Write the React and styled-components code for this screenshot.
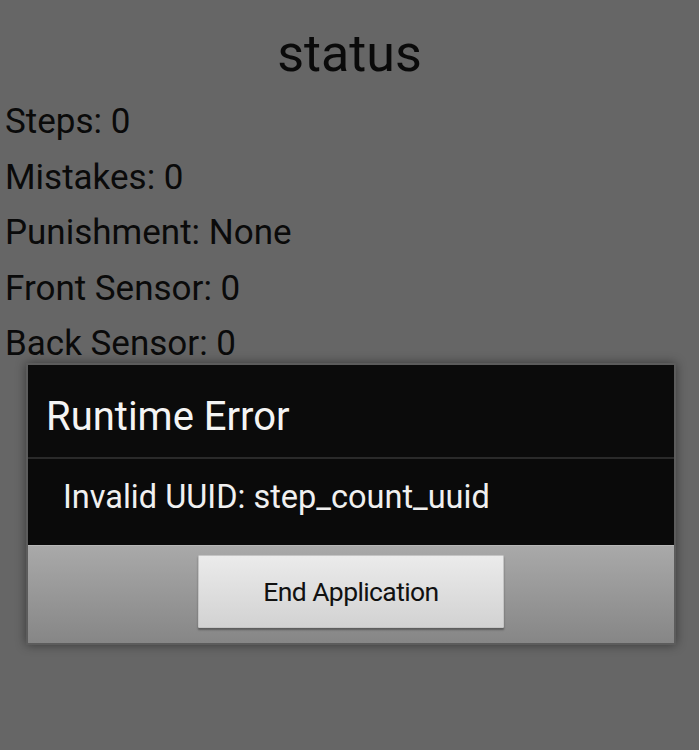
import styled, { createGlobalStyle } from 'styled-components'

const Global = createGlobalStyle`
  html, body {
    margin: 0;
    padding: 0;
    background: #666666;
    font-family: Roboto, 'Noto Sans', sans-serif;
  }
`

const Page = styled.div`
  position: relative;
  width: 699px;
  height: 750px;
  overflow: hidden;
  background: #666666;
  color: #0a0a0a;
`

const Title = styled.h1`
  margin: 0;
  padding-top: 26px;
  font-size: 52px;
  font-weight: 400;
  line-height: 56px;
  text-align: center;
`

const Stats = styled.div`
  padding: 12px 0 0 5px;
  display: flex;
  flex-direction: column;
`

const Stat = styled.div`
  font-size: 35px;
  line-height: 55.5px;
`

const Dialog = styled.div`
  position: absolute;
  top: 363px;
  left: 26px;
  width: 646px;
  border: 2px solid #5c5c5c;
  box-shadow: 0 0 10px rgba(0, 0, 0, 0.45);
  display: flex;
  flex-direction: column;
`

const DialogTitle = styled.div`
  background: #0b0b0b;
  color: #f4f4f4;
  font-size: 40px;
  line-height: 36px;
  padding: 34px 0 22px 18px;
  border-bottom: 2px solid #2a2a2a;
`

const DialogBody = styled.div`
  background: #0a0a0a;
  color: #f0f0f0;
  font-size: 32.5px;
  line-height: 32px;
  height: 86px;
  box-sizing: border-box;
  padding: 22px 0 0 35px;
`

const Footer = styled.div`
  border-top: 1px solid #b8b8b8;
  background: linear-gradient(#a9a9a9, #868686);
  display: flex;
  justify-content: center;
  padding: 9px 0 15px;
`

const Button = styled.button`
  width: 306px;
  height: 73px;
  border: 1px solid #c4c4c4;
  border-radius: 1px;
  background: linear-gradient(#ebebeb, #d2d2d2);
  box-shadow: 0 2px 2px rgba(0, 0, 0, 0.35);
  font-family: Roboto, sans-serif;
  font-size: 26.5px;
  letter-spacing: -0.6px;
  color: #111;
  cursor: pointer;
`

const stats = [
  'Steps: 0',
  'Mistakes: 0',
  'Punishment: None',
  'Front Sensor: 0',
  'Back Sensor: 0',
]

const App = () => {
  return (
    <Page>
      <Global />
      <Title>status</Title>
      <Stats>
        {stats.map((s) => (
          <Stat key={s}>{s}</Stat>
        ))}
      </Stats>
      <Dialog>
        <DialogTitle>Runtime Error</DialogTitle>
        <DialogBody>Invalid UUID: step_count_uuid</DialogBody>
        <Footer>
          <Button>End Application</Button>
        </Footer>
      </Dialog>
    </Page>
  )
}

export default App
